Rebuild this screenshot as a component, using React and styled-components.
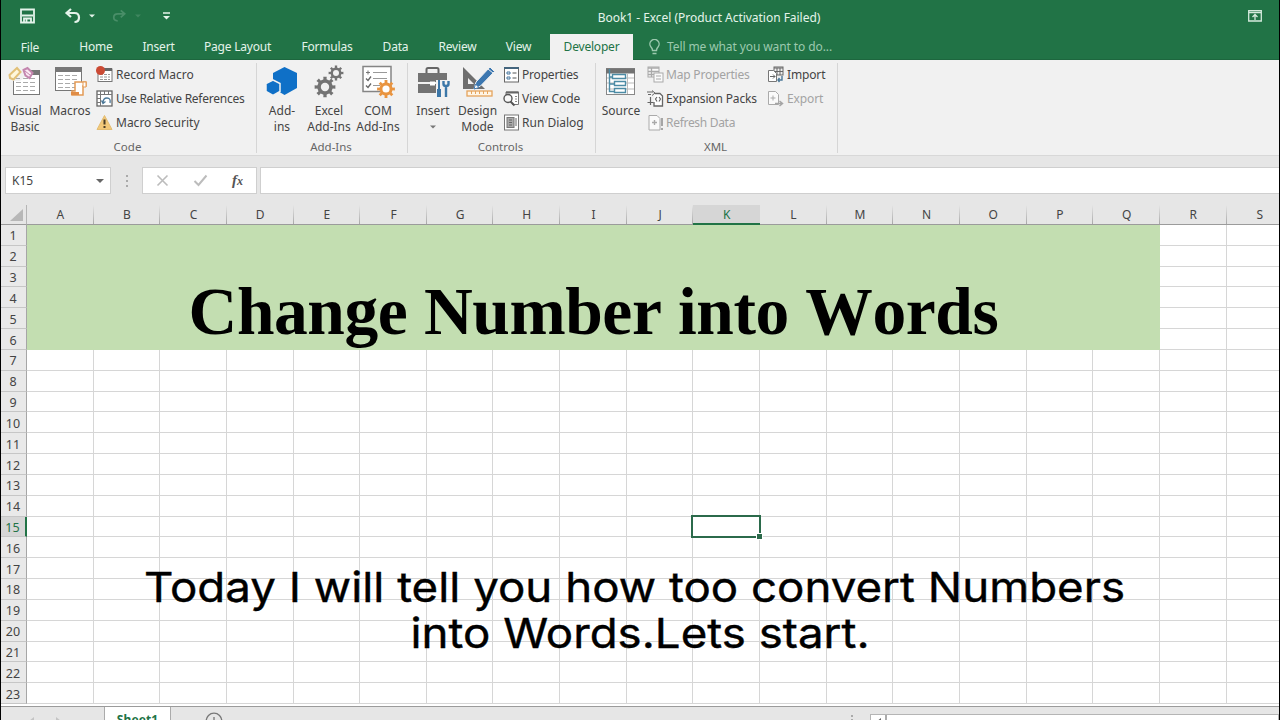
import React from 'react';
import styled, { createGlobalStyle } from 'styled-components';

const COLS = 'ABCDEFGHIJKLMNOPQRS'.split('');
const ROWS = Array.from({ length: 23 }, (_, i) => i + 1);

const GlobalStyle = createGlobalStyle`
  * {
    box-sizing: border-box;
  }

  body {
    margin: 0;
    overflow: hidden;
    background: #000;
  }

  svg {
    display: block;
    flex: none;
  }
`;

const Window = styled.div`
  position: relative;
  width: 1280px;
  height: 720px;
  display: flex;
  flex-direction: column;
  overflow: hidden;
  border-left: 1px solid #000;
  border-right: 1px solid #000;
  background-color: #e6e6e6;
  font-family: "Noto Sans", "Open Sans", sans-serif;
  font-size: 12px;
  color: #444;
  white-space: nowrap;
`;

const TitleBar = styled.div`
  height: 34px;
  display: grid;
  grid-template-columns: 520px 376px 1fr;
  background-color: #217346;
  color: #e4f3ea;
`;

const QuickAccess = styled.div`
  display: flex;
  align-items: center;
  padding: 0 0 3px 18px;
`;

const Title = styled.div`
  display: flex;
  justify-content: center;
  align-items: center;
  letter-spacing: ${(p) => p.$spacing}px;
`;

const WindowButtons = styled.div`
  display: flex;
  justify-content: flex-end;
  align-items: center;
  padding: 0 17px 3px 0;
`;

const Tabs = styled.div`
  height: 26px;
  display: flex;
  background-color: #217346;
  border-bottom: 1px solid #1d663e;
`;

const Tab = styled.div`
  width: ${(p) => p.$width}px;
  height: 26px;
  display: flex;
  justify-content: center;
  align-items: center;
  padding-bottom: ${(p) => (p.$file ? 0 : 2)}px;
  letter-spacing: ${(p) => p.$spacing || 0}px;
  color: ${(p) => (p.$active ? '#217346' : '#e4f3ea')};
  background-color: ${(p) => (p.$active ? '#f1f1f1' : 'transparent')};
`;

const TellMe = styled.div`
  display: flex;
  align-items: center;
  gap: 6px;
  padding-left: 15px;
  color: #9cc9ae;
  letter-spacing: -0.1px;
`;

const Ribbon = styled.div`
  height: 96px;
  display: flex;
  padding-top: 3px;
  background-color: #f1f1f1;
  border-bottom: 1px solid #d8d8d8;
`;

const Group = styled.div`
  width: ${(p) => p.$width}px;
  height: 90px;
  display: flex;
  flex-direction: column;
  border-right: 1px solid #d6d6d6;
`;

const GroupBody = styled.div`
  flex: none;
  height: 76px;
  display: flex;
  padding-left: ${(p) => p.$left}px;
`;

const GroupLabel = styled.div`
  line-height: 16px;
  padding-right: 2px;
  text-align: center;
  font-size: 11.5px;
  color: #666;
`;

const BigButton = styled.div`
  width: ${(p) => p.$width}px;
  margin-right: ${(p) => p.$gap || 0}px;
  display: flex;
  flex-direction: column;
  align-items: center;
  padding-top: 2px;
  line-height: 16px;
  text-align: center;
  letter-spacing: ${(p) => p.$spacing || 0}px;

  svg {
    margin-bottom: 4px;
  }
`;

const SmallColumn = styled.div`
  width: ${(p) => p.$width}px;
  display: flex;
  flex-direction: column;
`;

const SmallButton = styled.div`
  height: 24px;
  display: flex;
  align-items: center;
  gap: ${(p) => p.$gap || 2}px;
  padding-bottom: 2px;
  letter-spacing: ${(p) => p.$spacing || 0}px;
  color: ${(p) => (p.$disabled ? '#a3a3a3' : '#444')};
`;

const FormulaBar = styled.div`
  height: 49px;
  display: flex;
  align-items: flex-start;
  padding: 11px 0 0 4px;
`;

const NameBox = styled.div`
  width: 106px;
  height: 27px;
  display: flex;
  justify-content: space-between;
  align-items: center;
  padding: 0 6px 0 6px;
  background-color: #fff;
  border: 1px solid #cfcfcf;
`;

const Grip = styled.div`
  width: 31px;
  height: 27px;
  display: flex;
  flex-direction: column;
  justify-content: center;
  align-items: center;
  gap: 3px;
`;

const Dot = styled.i`
  width: 2px;
  height: 2px;
  background-color: #aaa;
`;

const FormulaButtons = styled.div`
  width: 115px;
  height: 27px;
  display: flex;
  align-items: center;
  padding-left: 13px;
  gap: 24px;
  margin-right: 3px;
  background-color: #fff;
  border: 1px solid #cfcfcf;
`;

const Fx = styled.span`
  font: italic bold 15px "Liberation Serif", serif;
  color: #555;

  small {
    font-size: 12px;
  }
`;

const FormulaInput = styled.div`
  flex: 1;
  height: 27px;
  background-color: #fff;
  border: 1px solid #cfcfcf;
  border-right: none;
`;

const Sheet = styled.div`
  height: 502px;
  display: grid;
  grid-template-columns: 26px repeat(19, 66.65px);
  grid-template-rows: 20px repeat(24, 20.83px);
  overflow: hidden;
  background-color: #fff;
  border-bottom: 1px solid #9b9b9b;
`;

const Corner = styled.div`
  grid-column: 1;
  grid-row: 1;
  display: flex;
  justify-content: flex-end;
  align-items: flex-end;
  padding: 0 3px 3px 0;
  background-color: #e6e6e6;
  border-right: 1px solid #b5b5b5;
  border-bottom: 1px solid #9b9b9b;
`;

const ColumnHead = styled.div`
  grid-column: ${(p) => p.$col + 2};
  grid-row: 1;
  display: flex;
  justify-content: center;
  align-items: center;
  color: ${(p) => (p.$active ? '#217346' : '#444')};
  background: ${(p) =>
    p.$active ? '#d6d6d6' : 'linear-gradient(#e6e6e6, #a8a8a8) right / 1px 100% no-repeat #e6e6e6'};
  border-bottom: ${(p) => (p.$active ? '2px solid #217346' : '1px solid #9b9b9b')};
`;

const RowHead = styled.div`
  grid-column: 1;
  grid-row: ${(p) => p.$row + 1};
  display: flex;
  justify-content: center;
  align-items: center;
  padding-top: 2px;
  padding-right: 1px;
  font-size: 12.5px;
  color: ${(p) => (p.$active ? '#217346' : '#444')};
  background-color: ${(p) => (p.$active ? '#d6d6d6' : '#e9e9e9')};
  border-right: ${(p) => (p.$active ? '2px solid #217346' : '1px solid #a6a6a6')};
  border-bottom: 1px solid #c6c6c6;
`;

const Cell = styled.div`
  position: relative;
  grid-column: ${(p) => p.$col + 2};
  grid-row: ${(p) => p.$row + 1};
  border-right: 1px solid #d6d6d6;
  border-bottom: 1px solid #d6d6d6;
`;

const Selection = styled.div`
  position: absolute;
  z-index: 1;
  inset: -2px -2px -2px -2px;
  border: 2px solid #2b6a4b;

  &::after {
    content: "";
    position: absolute;
    right: -3px;
    bottom: -3px;
    width: 5px;
    height: 5px;
    background-color: #2b6a4b;
    box-shadow: 0 0 0 1px #fff;
  }
`;

const Banner = styled.div`
  grid-column: 2 / span 17;
  grid-row: 2 / span 6;
  display: flex;
  justify-content: center;
  align-items: flex-end;
  background-color: #c3deb1;
  font: bold 67.5px/76px "Liberation Serif", "Times New Roman", serif;
  font-kerning: none;
  letter-spacing: -0.4px;
  color: #000;
`;

const Bottom = styled.div`
  flex: 1;
  display: flex;
  align-items: flex-start;
  overflow: hidden;
`;

const SheetNav = styled.div`
  width: 103px;
  display: flex;
  gap: 22px;
  padding: 10px 0 0 27px;
`;

const SheetTab = styled.div`
  width: 67px;
  height: 22px;
  padding-top: 4px;
  text-align: center;
  line-height: 17px;
  font-weight: 700;
  letter-spacing: 0.1px;
  color: #217346;
  background-color: #fff;
  border-left: 1px solid #ababab;
  border-right: 1px solid #ababab;
`;

const AddSheet = styled.div`
  width: 678px;
  padding: 5px 0 0 34px;
`;

const ScrollBar = styled.div`
  flex: 1;
  height: 20px;
  display: flex;
  margin-top: 7px;
  background-color: #fff;
  border: 1px solid #b5b5b5;
`;

const ScrollArrow = styled.div`
  width: 16px;
  padding: 3px 0 0 4px;
  border-right: 2px solid #ababab;
`;

const BottomGrip = styled.div`
  width: 21px;
  padding: 8px 0 0 2px;
  display: flex;
  flex-direction: column;
  gap: 2px;
`;

const Caption = styled.div`
  position: absolute;
  left: 0;
  top: 565px;
  width: 1267px;
  text-align: center;
  font: 400 41.5px/45.5px Inter, "Noto Sans", sans-serif;
  color: #000;
  -webkit-text-stroke: 0.4px #000;
  transform: scaleX(1.1);
`;

const CaptionLine = styled.div`
  padding-left: ${(p) => p.$indent || 0}px;
`;

const Caret = ({ color = '#666', size = 7 }) => (
  <svg width={size} height="4" viewBox="0 0 8 4">
    <path d="M0 0h8L4 4z" fill={color} />
  </svg>
);

/* lined sheet with a dark header, shared by several ribbon icons */
const Table = ({ x, y, w, h, stroke = '#777' }) => (
  <g>
    <rect x={x + 0.5} y={y + 0.5} width={w - 1} height={h - 1} fill="#fff" stroke={stroke} />
    <path d={`M${x} ${y + 2.5}h${w}`} stroke={stroke} strokeWidth="5" />
    <path
      d={`M${x + 3} ${y + 8.5}h${w - 6}M${x + 3} ${y + 12.5}h${w - 6}M${x + 3} ${y + 16.5}h${w - 6}M${x + 3} ${y + 20.5}h${w - 6}`}
      stroke="#aaa"
      strokeDasharray="5 2"
    />
  </g>
);

const gearPath = (cx, cy, r, teeth) => {
  const pts = [];
  for (let i = 0; i < teeth; i++) {
    const a = (i / teeth) * Math.PI * 2;
    const s = Math.PI / teeth;
    [[-0.95, 0.72], [-0.5, 0.75], [-0.42, 1], [0.42, 1], [0.5, 0.75]].forEach(([k, d]) => {
      pts.push(`${(cx + Math.cos(a + k * s) * r * d).toFixed(2)} ${(cy + Math.sin(a + k * s) * r * d).toFixed(2)}`);
    });
  }
  return `M${pts.join('L')}Z`;
};

const Gear = ({ cx, cy, r, color, hole = '#f1f1f1' }) => (
  <g>
    <path d={gearPath(cx, cy, r, 8)} fill={color} />
    <circle cx={cx} cy={cy} r={r * 0.4} fill={hole} />
  </g>
);

const Big = ({ children }) => (
  <svg width="34" height="34" viewBox="0 0 34 34" fill="none">
    {children}
  </svg>
);

const Small = ({ children }) => (
  <svg width="17" height="17" viewBox="0 0 17 17" fill="none">
    {children}
  </svg>
);

const VisualBasicIcon = () => (
  <Big>
    <Table x={5} y={5} w={27} h={25} />
    <path d="M0 0h22v5l-3 5-7 6H0z" fill="#f1f1f1" />
    <path d="M5.500 16v14M5 29.500h10" stroke="#777" />
    <path d="M8 13.500h4" stroke="#aaa" />
    <path d="M1.500 10L9 3l3.500 4-7 7.500-3.500-1.500z" fill="#fff7dc" stroke="#e2c078" strokeWidth="2" />
    <path d="M15.500 5l4-2 5 5-3 5-4-2.500z" fill="#fbeaf4" stroke="#c486af" strokeWidth="2" />
    <path d="M17 6l5 4" stroke="#c486af" />
  </Big>
);

const MacrosIcon = () => (
  <Big>
    <Table x={2} y={2} w={27} h={24} />
    <path d="M19 26h3v-9h11v4h-3v9H19z" fill="#fff" stroke="#e39a55" strokeWidth="1.500" />
    <path d="M18 27h8v3h-8z" fill="#e08c45" />
    <path d="M30 17v5h3v-5z" fill="#fff" stroke="#e39a55" />
  </Big>
);

const AddInsIcon = () => (
  <Big>
    <path d="M19.500 2L32 8v15l-12.500 7L8 23V8z" fill="#0f70c7" />
    <path d="M8 15l7 3.500v8L8 30.500l-7-4v-8z" fill="#0f70c7" stroke="#f1f1f1" strokeWidth="1.500" />
  </Big>
);

const ExcelAddInsIcon = () => (
  <Big>
    <Gear cx={13} cy={22} r={10.500} color="#737373" />
    <Gear cx={24} cy={8} r={7.500} color="#737373" />
  </Big>
);

const ComAddInsIcon = () => (
  <Big>
    <rect x="2" y="1.500" width="28" height="25" fill="#fff" stroke="#858585" strokeWidth="1.500" />
    <path d="M12 7.500h14M12 13.500h14M12 20.500h7" stroke="#999" />
    <path d="M5 7.500h4M7 5.500v4" stroke="#777" />
    <path d="M5 13.500l2 2 3-4M5 20.500l2 2 3-4" stroke="#666" strokeWidth="1.300" />
    <Gear cx={25} cy={24} r={9} color="#e9943f" hole="#fff" />
  </Big>
);

const InsertIcon = () => (
  <Big>
    <path d="M10.500 8V4.500q0-1.500 1.500-1.500h9q1.500 0 1.500 1.500V8" stroke="#666" strokeWidth="2" />
    <path d="M2 8h29v9H2zM2 19h29v9H2z" fill="#737373" />
    <path d="M14 16.500h5v4h-5z" fill="#fff" />
    <path d="M20 15h14v17H20z" fill="#f1f1f1" />
    <path d="M23 15v8M23 23v8" stroke="#3c77a8" strokeWidth="2" />
    <path d="M23 24v8" stroke="#3c77a8" strokeWidth="4" />
    <path d="M27.500 16v3q0 2 2.500 2t2.500-2v-3M30 21v11" stroke="#3c77a8" strokeWidth="2.400" />
  </Big>
);

const DesignIcon = () => (
  <Big>
    <path d="M2 2l22 22H2z" fill="#6e6e6e" />
    <path d="M7 13l6 6H7z" fill="#f1f1f1" />
    <path d="M13 24l2-7L29 2l4.500 4.500-14 14.500z" fill="#3c77b0" stroke="#f1f1f1" />
    <path d="M13 24l1.500-5 3.500 3.500z" fill="#fff" stroke="#3c77b0" />
    <path d="M27 4l5 4" stroke="#f1f1f1" />
    <rect x="6" y="26" width="25" height="5" fill="#fff5e6" stroke="#e5a45d" strokeWidth="1.300" />
    <path d="M10.500 26v3M14.500 26v3M18.500 26v3M22.500 26v3M26.500 26v3" stroke="#e5a45d" />
  </Big>
);

const SourceIcon = () => (
  <Big>
    <rect x="2.500" y="3.500" width="28" height="26" fill="#fff" stroke="#888" />
    <path d="M2 6h29" stroke="#737373" strokeWidth="5" />
    <path d="M3 13h27M3 18h27M3 24h27M23.500 8v21" stroke="#bbb" />
    <path d="M5.500 4v22.500H11M5.500 12h5M5.500 19h5" stroke="#4c8ba5" strokeWidth="1.400" />
    <path d="M8.500 9.500h13v4h-13zM10.500 16.500h11v4h-11zM10.500 23.500h11v4h-11z" fill="#fff" stroke="#4c8ba5" strokeWidth="1.400" />
  </Big>
);

const RecordIcon = () => (
  <Small>
    <rect x="2" y="3" width="14" height="12.500" fill="#fff" stroke="#777" />
    <path d="M2 3.500h14" stroke="#666" strokeWidth="3" />
    <path d="M4 8.500h10M4 11h10M4 13.500h10" stroke="#999" strokeDasharray="3 1" />
    <circle cx="4.500" cy="4.500" r="4.500" fill="#cb4a34" />
  </Small>
);

const RelativeIcon = () => (
  <Small>
    <rect x="1" y="1" width="15" height="15" fill="#fff" stroke="#666" strokeWidth="1.300" />
    <path d="M1 4.500h15M4.500 1v15M8.500 1v3M12.500 1v3M1 8.500h3M1 12.500h3" stroke="#777" />
    <path d="M7 13q0-5 4-5t3 5M5.500 10.500L7 13.500l2.500-2" stroke="#4b7898" strokeWidth="1.300" />
  </Small>
);

const SecurityIcon = () => (
  <Small>
    <path d="M8.500 1.500L16 15.500H1z" fill="#f2c879" stroke="#e4bd72" />
    <path d="M8.500 5.500v5M8.500 12v2" stroke="#4a3d26" strokeWidth="2" />
  </Small>
);

const PropertiesIcon = () => (
  <Small>
    <rect x="1.500" y="1.500" width="14" height="14.500" fill="#fff" stroke="#666" />
    <path d="M1 2h15" stroke="#44657e" strokeWidth="2" />
    <path d="M4 6h3v2H4zM4 11h3v2H4z" stroke="#44759d" />
    <path d="M9.500 7h4M9.500 12h4" stroke="#555" />
  </Small>
);

const ViewCodeIcon = () => (
  <Small>
    <path d="M3 5V2h12.500v12.500H9" fill="#fff" stroke="#777" />
    <path d="M3 2.500h12.500" stroke="#666" strokeWidth="2" />
    <path d="M12 6.500h2M12 9h2M12 11.500h2" stroke="#888" />
    <circle cx="5" cy="8.500" r="4" fill="#f7f7f7" stroke="#555" strokeWidth="1.400" />
    <path d="M7.500 11.500l4 4" stroke="#555" strokeWidth="2" />
  </Small>
);

const RunDialogIcon = () => (
  <Small>
    <rect x="1.500" y="1" width="14" height="15" fill="#fff" stroke="#777" />
    <rect x="4" y="3.500" width="7" height="10" fill="#aaa" stroke="#777" />
    <path d="M6 6h3M6 8.500h3M6 11h3M13 4v8" stroke="#666" />
  </Small>
);

const MapIcon = () => (
  <Small>
    <rect x="1" y="1" width="11" height="10" fill="#fafafa" stroke="#aaa" />
    <path d="M1 2h11M1 5.500h11M1 8.500h11M4.500 2v9" stroke="#aaa" strokeWidth="1.300" />
    <rect x="7" y="7" width="9" height="9" fill="#fafafa" stroke="#aaa" />
    <path d="M9 10h5M9 13h5" stroke="#aaa" />
  </Small>
);

const ExpansionIcon = () => (
  <Small>
    <path d="M8 3.500h5l2.500 2.500v10H7v-4" fill="#fff" stroke="#666" strokeWidth="1.300" />
    <path d="M0 2h6M1 4.500h3M3.500 7v8M.5 12.500h6M10 7l-1.500 2L10 11.500M12 7l1.500 2L12 11.500" stroke="#666" strokeWidth="1.200" />
    <path d="M5 .5l3 2.500-3 2.500" stroke="#666" />
  </Small>
);

const RefreshIcon = () => (
  <Small>
    <path d="M2 1.500h8l3 3V16H2z" fill="#fafafa" stroke="#aaa" />
    <path d="M5 8.500h5M7.500 6v5" stroke="#aaa" strokeWidth="1.400" />
    <path d="M15 4v8M15 14v2" stroke="#a5a5a5" strokeWidth="2" />
  </Small>
);

const ImportIcon = () => (
  <Small>
    <rect x="7" y="1" width="9" height="8" fill="#eee" stroke="#666" />
    <path d="M7 2h9M7 5.500h9M10 2v7M13 2v7" stroke="#666" />
    <path d="M1.500 4.500h5l3 3v8h-8z" fill="#fff" stroke="#777" />
    <path d="M3 10.500h5M6 8.500l2 2-2 2" stroke="#666" />
    <path d="M11 14h4v-4M12.500 12L11 14l1.500 2" stroke="#4b7898" strokeWidth="1.400" />
  </Small>
);

const ExportIcon = () => (
  <Small>
    <path d="M1.500 1.500h7l3 3v10h-10z" fill="#fafafa" stroke="#aaa" />
    <path d="M3.500 8h5M6 5.500v5" stroke="#aaa" />
    <path d="M8 13.500h7M12.500 11l3 2.500-3 2.500" stroke="#a5a5a5" strokeWidth="1.500" />
  </Small>
);

const TABS = [
  { label: 'File', width: 58, file: true },
  { label: 'Home', width: 74 },
  { label: 'Insert', width: 51 },
  { label: 'Page Layout', width: 107 },
  { label: 'Formulas', width: 72 },
  { label: 'Data', width: 65 },
  { label: 'Review', width: 59 },
  { label: 'View', width: 63 },
  { label: 'Developer', width: 83, active: true },
];

const App = () => (
  <>
    <GlobalStyle />
    <Window>
      <TitleBar>
        <QuickAccess>
          <svg width="17" height="16" viewBox="0 0 17 16" fill="none" stroke="#e4f3ea" strokeWidth="1.800">
            <path d="M2 1.500h13v13H2zM3 7.500h11M5 14v-3.500h7v3.500M7.500 11v3" />
          </svg>
          <svg width="18" height="16" viewBox="0 0 18 16" fill="none" stroke="#e4f3ea" strokeWidth="2.200" style={{ marginLeft: 28 }}>
            <path d="M7 1L2.500 5 7 9M3 5h7.500q4.500 0 4.500 4.500t-4.500 4.500" />
          </svg>
          <svg width="6" height="4" viewBox="0 0 8 4" style={{ marginLeft: 7 }}>
            <path d="M0 0h8L4 4z" fill="#e4f3ea" />
          </svg>
          <svg width="16" height="14" viewBox="0 0 18 16" fill="none" stroke="#498e68" strokeWidth="2" style={{ marginLeft: 16 }}>
            <path d="M11 1.500l4.500 4-4.500 4M15 5.500H7.500q-4.500 0-4.500 4t4.500 4" />
          </svg>
          <svg width="6" height="4" viewBox="0 0 8 4" style={{ marginLeft: 8 }}>
            <path d="M0 0h8L4 4z" fill="#3f865f" />
          </svg>
          <svg width="7" height="8" viewBox="0 0 7 8" style={{ marginLeft: 22 }}>
            <path d="M0 1h7" stroke="#e4f3ea" strokeWidth="1.500" />
            <path d="M0 4h7L3.500 7.500z" fill="#e4f3ea" />
          </svg>
        </QuickAccess>
        <Title $spacing={-0.03}>Book1 - Excel (Product Activation Failed)</Title>
        <WindowButtons>
          <svg width="14" height="12" viewBox="0 0 14 12" fill="none" stroke="#d5eadd" strokeWidth="1.300">
            <path d="M.7.700h12.600v10.300H.7zM.7 2.500h12.600M7 10V4.500M4.500 7L7 4.500 9.500 7" />
          </svg>
        </WindowButtons>
      </TitleBar>

      <Tabs>
        {TABS.map((t) => (
          <Tab key={t.label} $width={t.width} $file={t.file} $active={t.active} $spacing={-0.2}>
            {t.label}
          </Tab>
        ))}
        <TellMe>
          <svg width="13" height="16" viewBox="0 0 13 16" fill="none" stroke="#9cc9ae" strokeWidth="1.400">
            <path d="M4.500 11.500q0-2-1.500-3.500a4.600 4.600 0 1 1 7 0q-1.500 1.500-1.500 3.500zM4.500 14.500h4" />
          </svg>
          Tell me what you want to do...
        </TellMe>
      </Tabs>

      <Ribbon>
        <Group $width={256}>
          <GroupBody $left={1}>
            <BigButton $width={46}><VisualBasicIcon />Visual<br />Basic</BigButton>
            <BigButton $width={44} $gap={4}><MacrosIcon />Macros</BigButton>
            <SmallColumn $width={155}>
              <SmallButton $gap={3}><RecordIcon />Record Macro</SmallButton>
              <SmallButton $gap={3} $spacing={-0.25}><RelativeIcon />Use Relative References</SmallButton>
              <SmallButton $gap={3}><SecurityIcon />Macro Security</SmallButton>
            </SmallColumn>
          </GroupBody>
          <GroupLabel>Code</GroupLabel>
        </Group>

        <Group $width={151}>
          <GroupBody $left={3}>
            <BigButton $width={44} $gap={1}><AddInsIcon />Add-<br />ins</BigButton>
            <BigButton $width={48}><ExcelAddInsIcon />Excel<br />Add-Ins</BigButton>
            <BigButton $width={50}><ComAddInsIcon />COM<br />Add-Ins</BigButton>
          </GroupBody>
          <GroupLabel>Add-Ins</GroupLabel>
        </Group>

        <Group $width={188}>
          <GroupBody $left={5}>
            <BigButton $width={40} $gap={2}>
              <InsertIcon />Insert
              <svg width="6" height="4" viewBox="0 0 8 4" style={{ marginTop: 6 }}>
                <path d="M0 0h8L4 4z" fill="#777" />
              </svg>
            </BigButton>
            <BigButton $width={45} $gap={3}><DesignIcon />Design<br />Mode</BigButton>
            <SmallColumn $width={90}>
              <SmallButton $spacing={-0.2}><PropertiesIcon />Properties</SmallButton>
              <SmallButton><ViewCodeIcon />View Code</SmallButton>
              <SmallButton><RunDialogIcon />Run Dialog</SmallButton>
            </SmallColumn>
          </GroupBody>
          <GroupLabel>Controls</GroupLabel>
        </Group>

        <Group $width={242}>
          <GroupBody $left={3}>
            <BigButton $width={44} $gap={4}><SourceIcon />Source</BigButton>
            <SmallColumn $width={120}>
              <SmallButton $disabled $spacing={-0.2}><MapIcon />Map Properties</SmallButton>
              <SmallButton $spacing={-0.15}><ExpansionIcon />Expansion Packs</SmallButton>
              <SmallButton $disabled $spacing={-0.3}><RefreshIcon />Refresh Data</SmallButton>
            </SmallColumn>
            <SmallColumn $width={66}>
              <SmallButton $gap={3} $spacing={-0.15}><ImportIcon />Import</SmallButton>
              <SmallButton $gap={3} $spacing={-0.1} $disabled><ExportIcon />Export</SmallButton>
            </SmallColumn>
          </GroupBody>
          <GroupLabel>XML</GroupLabel>
        </Group>
      </Ribbon>

      <FormulaBar>
        <NameBox>K15 <Caret size={8} /></NameBox>
        <Grip><Dot /><Dot /><Dot /></Grip>
        <FormulaButtons>
          <svg width="13" height="13" viewBox="0 0 13 13" stroke="#bcbcbc" strokeWidth="1.600">
            <path d="M1.500 1.500l10 10M11.500 1.500l-10 10" />
          </svg>
          <svg width="15" height="13" viewBox="0 0 15 13" fill="none" stroke="#bcbcbc" strokeWidth="2">
            <path d="M1.500 7l4 4 8-9.500" />
          </svg>
          <Fx>f<small>x</small></Fx>
        </FormulaButtons>
        <FormulaInput />
      </FormulaBar>

      <Sheet>
        <Corner>
          <svg width="13" height="12" viewBox="0 0 13 12">
            <path d="M13 0v12H0z" fill="#b7b7b7" />
          </svg>
        </Corner>
        {COLS.map((c, i) => (
          <ColumnHead key={c} $col={i} $active={c === 'K'}>{c}</ColumnHead>
        ))}
        {ROWS.map((r) => (
          <RowHead key={r} $row={r} $active={r === 15}>{r}</RowHead>
        ))}
        {ROWS.map((r) =>
          COLS.map((c, i) =>
            r < 7 && i < 17 ? null : (
              <Cell key={c + r} $col={i} $row={r}>
                {c === 'K' && r === 15 && <Selection />}
              </Cell>
            )
          )
        )}
        <Banner>Change Number into Words</Banner>
      </Sheet>

      <Bottom>
        <SheetNav>
          <svg width="6" height="8" viewBox="0 0 6 8"><path d="M6 0v8L1 4z" fill="#c4c4c4" /></svg>
          <svg width="6" height="8" viewBox="0 0 6 8"><path d="M0 0v8l5-4z" fill="#c4c4c4" /></svg>
        </SheetNav>
        <SheetTab>Sheet1</SheetTab>
        <AddSheet>
          <svg width="18" height="18" viewBox="0 0 18 18" fill="none" stroke="#777" strokeWidth="1.300">
            <circle cx="9" cy="9" r="7.800" />
            <path d="M9 5v8M5 9h8" />
          </svg>
        </AddSheet>
        <BottomGrip><Dot /><Dot /><Dot /></BottomGrip>
        <ScrollBar>
          <ScrollArrow>
            <svg width="6" height="8" viewBox="0 0 6 8"><path d="M6 0v8L1 4z" fill="#666" /></svg>
          </ScrollArrow>
        </ScrollBar>
      </Bottom>

      <Caption>
        <CaptionLine>Today I will tell you how too convert Numbers</CaptionLine>
        <CaptionLine $indent={10}>into Words.Lets start.</CaptionLine>
      </Caption>
    </Window>
  </>
);

export default App;
